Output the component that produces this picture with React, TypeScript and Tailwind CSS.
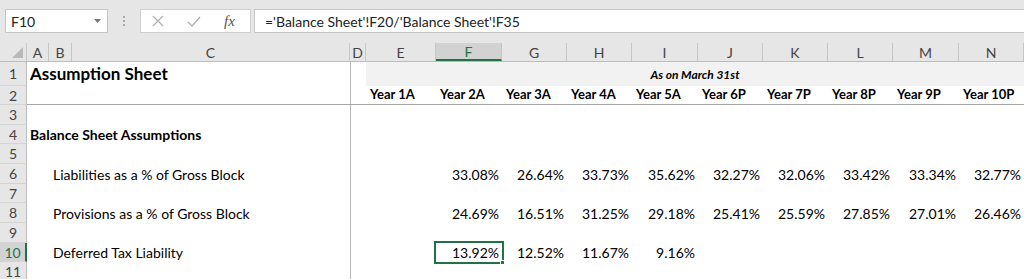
import React from 'react';

const cols = [
  { l: 'E', w: 70 },
  { l: 'F', w: 66 },
  { l: 'G', w: 65 },
  { l: 'H', w: 65 },
  { l: 'I', w: 66 },
  { l: 'J', w: 65 },
  { l: 'K', w: 65 },
  { l: 'L', w: 65 },
  { l: 'M', w: 66 },
  { l: 'N', w: 65 },
];

const years = ['Year 1A', 'Year 2A', 'Year 3A', 'Year 4A', 'Year 5A', 'Year 6P', 'Year 7P', 'Year 8P', 'Year 9P', 'Year 10P'];

const liab = ['', '33.08%', '26.64%', '33.73%', '35.62%', '32.27%', '32.06%', '33.42%', '33.34%', '32.77%'];
const prov = ['', '24.69%', '16.51%', '31.25%', '29.18%', '25.41%', '25.59%', '27.85%', '27.01%', '26.46%'];
const dtl = ['', '13.92%', '12.52%', '11.67%', '9.16%', '', '', '', '', ''];

const font = { fontFamily: 'Lato, "Open Sans", sans-serif' };

function RowHead({ n, h, active }: { n: number; h: number; active?: boolean }) {
  return (
    <div
      className={
        'flex w-[27px] shrink-0 items-center justify-center border-b border-[#d4d4d4] text-[14px] ' +
        (active
          ? 'border-r-2 border-r-[#217346] bg-[#d2d2d2] text-[#217346]'
          : 'border-r border-r-[#bdbdbd] bg-[#e6e6e6] text-[#444]')
      }
      style={{ height: h }}
    >
      {n}
    </div>
  );
}

function BodyRow({
  n,
  h,
  label,
  indent,
  bold,
  values,
  active,
}: {
  n: number;
  h: number;
  label?: string;
  indent?: boolean;
  bold?: boolean;
  values?: string[];
  active?: boolean;
}) {
  return (
    <div className="flex">
      <RowHead n={n} h={h} active={active} />
      <div
        className={
          'flex w-[324px] shrink-0 items-center whitespace-nowrap border-r border-[#b4b4b4] text-[14px] text-black ' +
          (indent ? 'pl-[26px] ' : 'pl-[3px] ') +
          (bold ? 'font-bold text-[13px]' : '')
        }
        style={{ height: h }}
      >
        {label}
      </div>
      <div className="w-[15px] shrink-0" />
      {cols.map((c, i) => (
        <div
          key={c.l}
          className={
            'relative flex shrink-0 items-center justify-end pr-[3px] text-[14px] text-black ' +
            (active && c.l === 'F' ? 'outline-2 outline-[#217346]' : '')
          }
          style={{ width: c.w, height: h }}
        >
          {values ? values[i] : ''}
          {active && c.l === 'F' && (
            <span className="absolute -bottom-[3px] -right-[3px] h-[5px] w-[5px] border border-white bg-[#217346]" />
          )}
        </div>
      ))}
    </div>
  );
}

export default function App() {
  return (
    <div className="h-[279px] w-[1024px] overflow-hidden bg-white" style={font}>
      {/* Formula bar */}
      <div className="flex h-[43px] items-start bg-[#e6e6e6] pt-[9px]">
        <div className="ml-[5px] flex h-[24px] w-[103px] items-center justify-between border border-[#c6c6c6] bg-white pl-[5px] pr-[6px] text-[14px] text-[#222]">
          <span>F10</span>
          <svg width="7" height="4" viewBox="0 0 7 4">
            <path d="M0 0 L7 0 L3.5 4 Z" fill="#777" />
          </svg>
        </div>
        <div className="ml-[13px] flex h-[24px] w-[6px] flex-col items-center justify-center gap-[2px]">
          <span className="h-[2px] w-[2px] bg-[#a8a8a8]" />
          <span className="h-[2px] w-[2px] bg-[#a8a8a8]" />
          <span className="h-[2px] w-[2px] bg-[#a8a8a8]" />
        </div>
        <div className="ml-[13px] flex h-[24px] w-[111px] items-center border border-[#d0d0d0] bg-white">
          <svg className="ml-[11px]" width="12" height="12" viewBox="0 0 12 12">
            <path d="M1 1 L11 11 M11 1 L1 11" stroke="#b0b0b0" strokeWidth="1.2" fill="none" />
          </svg>
          <svg className="ml-[23px]" width="14" height="11" viewBox="0 0 14 11">
            <path d="M1 6 L5 10 L13 1" stroke="#b0b0b0" strokeWidth="1.3" fill="none" />
          </svg>
          <span
            className="ml-[23px] text-[15px] italic text-[#555]"
            style={{ fontFamily: '"Liberation Serif", serif' }}
          >
            fx
          </span>
        </div>
        <div className="ml-[3px] flex h-[24px] flex-1 items-center border border-r-0 border-[#c6c6c6] bg-white pl-[10px] text-[14px] text-[#222]">
          ='Balance Sheet'!F20/'Balance Sheet'!F35
        </div>
      </div>

      {/* Column headers */}
      <div className="flex h-[19px] border-b border-[#bdbdbd] bg-[#e6e6e6] text-[14px] text-[#444]">
        <div className="relative w-[27px] shrink-0 border-r border-[#c6c6c6]">
          <svg className="absolute bottom-[3px] right-[3px]" width="11" height="11" viewBox="0 0 11 11">
            <path d="M11 0 L11 11 L0 11 Z" fill="#b9b9b9" />
          </svg>
        </div>
        <div className="flex w-[22px] shrink-0 items-center justify-center border-r border-[#c6c6c6]">A</div>
        <div className="flex w-[23px] shrink-0 items-center justify-center border-r border-[#c6c6c6]">B</div>
        <div className="flex w-[278px] shrink-0 items-center justify-center border-r border-[#c6c6c6]">C</div>
        <div className="flex w-[16px] shrink-0 items-center justify-center border-r border-[#c6c6c6]">D</div>
        {cols.map((c) => (
          <div
            key={c.l}
            className={
              'flex shrink-0 items-center justify-center border-r ' +
              (c.l === 'F'
                ? 'border-b-2 border-b-[#217346] border-r-[#c6c6c6] bg-[#d2d2d2] text-[#217346]'
                : 'border-[#c6c6c6]')
            }
            style={{ width: c.w }}
          >
            {c.l}
          </div>
        ))}
      </div>

      {/* Row 1 */}
      <div className="flex">
        <RowHead n={1} h={24} />
        <div className="flex h-[24px] w-[324px] shrink-0 items-end border-r border-[#b4b4b4] pl-[3px] text-[17px] font-bold text-black">
          Assumption Sheet
        </div>
        <div className="w-[15px] shrink-0" />
        <div className="flex h-[24px] flex-1 items-end justify-center bg-[#f2f2f2] pb-[2px] text-[12px] font-bold italic text-black">
          As on March 31st
        </div>
      </div>

      {/* Row 2 */}
      <div className="flex">
        <RowHead n={2} h={19} />
        <div className="flex flex-1 border-b border-[#a6a6a6]">
          <div className="h-[18px] w-[324px] shrink-0 border-r border-[#b4b4b4]" />
          <div className="w-[15px] shrink-0" />
          {cols.map((c, i) => (
            <div
              key={c.l}
              className="flex h-[18px] shrink-0 items-center pl-[4px] text-[13px] font-bold text-black"
              style={{ width: c.w }}
            >
              {years[i]}
            </div>
          ))}
        </div>
      </div>

      <BodyRow n={3} h={20} />
      <BodyRow n={4} h={19} label="Balance Sheet Assumptions" bold />
      <BodyRow n={5} h={20} />
      <BodyRow n={6} h={20} label="Liabilities as a % of Gross Block" indent values={liab} />
      <BodyRow n={7} h={19} />
      <BodyRow n={8} h={20} label="Provisions as a % of Gross Block" indent values={prov} />
      <BodyRow n={9} h={20} />
      <BodyRow n={10} h={19} label="Deferred Tax Liability" indent values={dtl} active />
      <BodyRow n={11} h={20} />
    </div>
  );
}
